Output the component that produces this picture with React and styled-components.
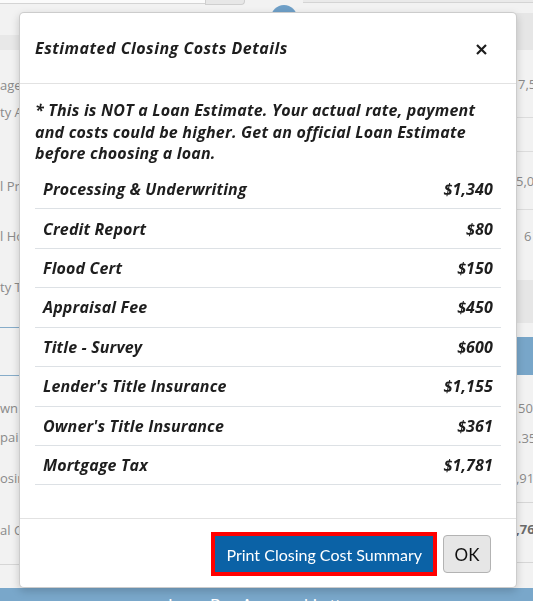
import React from "react";
import styled, { createGlobalStyle } from "styled-components";

const Global = createGlobalStyle`
  html, body { margin: 0; padding: 0; overflow: hidden; height: 100%; }
  body { background: #f2f2f2; font-family: Lato, "Noto Sans", sans-serif; }
  * { box-sizing: border-box; }
`;

const italicFont = `"Open Sans", "Noto Sans", sans-serif`;

/* ---------- background page ---------- */
const Page = styled.div`
  display: grid;
  grid-template-columns: 270px 1fr;
  width: 533px;
`;

const TopRow = styled.div`
  grid-column: 1 / -1;
  display: flex;
  align-items: flex-start;
  height: 13px;
`;

const Input = styled.div`
  width: 205px;
  height: 4px;
  background: #fbfbfb;
  border-bottom: 1px solid #d4d4d4;
`;

const Addon = styled.div`
  width: 40px;
  height: 5px;
  background: #e7e7e7;
  border: 1px solid #cfcfcf;
  border-top: none;
  border-radius: 0 0 4px 0;
`;

const Dot = styled.div`
  margin: 5px 0 0 26px;
  width: 26px;
  height: 26px;
  flex: none;
  border-radius: 50%;
  background: #6e9fc7;
`;

const TopBar = styled.div`
  flex: 1;
  height: 3px;
  margin-left: 6px;
  background: #eaeaea;
  border-bottom: 1px solid #d4d4d4;
`;

const Column = styled.div`
  display: flex;
  flex-direction: column;
  overflow: hidden;
`;

const BgRow = styled.div`
  height: ${(p) => p.$h}px;
  flex: none;
  display: flex;
  align-items: center;
  background: ${(p) => p.$bg || "transparent"};
  border-top: ${(p) => (p.$top ? `1px solid ${p.$top}` : "none")};
  border-bottom: ${(p) => (p.$line ? `1px solid ${p.$line}` : "none")};
  padding-left: ${(p) => p.$indent || 0}px;
  font-family: "Open Sans", sans-serif;
  font-size: 13px;
  font-weight: ${(p) => (p.$bold ? 700 : 400)};
  color: ${(p) => (p.$bold ? "#6a6a6a" : "#8a8a8a")};
  white-space: nowrap;
`;

const BottomBar = styled.div`
  grid-column: 1 / -1;
  height: 40px;
  background: #79a7ca;
  color: #fff;
  font-family: Lato, sans-serif;
  font-size: 17px;
  line-height: 1;
  padding: 9px 0 0 168px;
`;

const leftRows = [
  { h: 22 },
  { h: 15, bg: "#e8e8e8" },
  { h: 23 },
  { h: 24, t: "age" },
  { h: 3 },
  { h: 24, t: "ty A" },
  { h: 50 },
  { h: 24, t: "l Pr" },
  { h: 26 },
  { h: 24, t: "l Ho" },
  { h: 27 },
  { h: 24, t: "ty T" },
  { h: 28 },
  { h: 49, top: "#86acc9", line: "#86acc9" },
  { h: 20 },
  { h: 24, t: "wn" },
  { h: 5 },
  { h: 24, t: "pai" },
  { h: 17 },
  { h: 24, t: "osin" },
  { h: 28 },
  { h: 24, t: "al C" },
  { h: 23, line: "#d6d6d6" },
  { h: 23 },
];

const rightRows = [
  { h: 37, bg: "#e6e6e6" },
  { h: 68, t: "7,5", i: 248, line: "#dcdcdc" },
  { h: 34, line: "#dcdcdc" },
  { h: 58, t: "5,0", i: 246, line: "#dcdcdc" },
  { h: 52, t: "6", i: 254 },
  { h: 18 },
  { h: 43, bg: "#e6e6e6" },
  { h: 14 },
  { h: 38, bg: "#78a6c9" },
  { h: 21 },
  { h: 24, t: "50", i: 248 },
  { h: 5 },
  { h: 25, t: ".35", i: 248 },
  { h: 16 },
  { h: 24, t: ",91", i: 246 },
  { h: 13, line: "#d6d6d6" },
  { h: 14 },
  { h: 24, t: ",76", i: 246, b: true },
  { h: 22, line: "#d6d6d6" },
  { h: 23 },
];

/* ---------- modal ---------- */
const Overlay = styled.div`
  position: fixed;
  inset: 0;
  padding: 12px 0 0 19px;
`;

const Modal = styled.div`
  width: 498px;
  background: #fff;
  border: 1px solid rgba(0, 0, 0, 0.2);
  border-radius: 5px;
  box-shadow: 0 3px 9px rgba(0, 0, 0, 0.18);
  color: #1e1e1e;
  font-family: ${italicFont};
`;

const Header = styled.div`
  height: 71px;
  display: flex;
  align-items: center;
  justify-content: space-between;
  padding: 0 0 0 15px;
  border-bottom: 1px solid #e2e2e2;
`;

const Title = styled.h5`
  margin: 0;
  font-size: 16px;
  font-weight: 700;
  font-style: italic;
  letter-spacing: 0.5px;
`;

const Close = styled.button`
  width: 70px;
  height: 40px;
  border: none;
  background: none;
  display: flex;
  align-items: center;
  justify-content: center;
  padding: 2px 0 0 0;
  cursor: pointer;
`;

const Body = styled.div`
  padding: 16px 15px;
`;

const Disclaimer = styled.p`
  margin: 0 0 5px;
  font-size: 16px;
  font-weight: 700;
  font-style: italic;
  line-height: 21.5px;
  letter-spacing: 0.2px;
`;

const Table = styled.table`
  width: 100%;
  border-collapse: collapse;
  margin-bottom: 17px;
`;

const Cell = styled.td`
  height: 39.43px;
  padding: 0 8px;
  border-bottom: 1px solid #dde1e5;
  font-size: 16px;
  font-weight: 700;
  font-style: italic;
  letter-spacing: 0.15px;
  text-align: ${(p) => (p.$right ? "right" : "left")};
  white-space: nowrap;
`;

const Footer = styled.div`
  display: flex;
  justify-content: flex-end;
  align-items: center;
  gap: 10px;
  padding: 16px 25px 14px;
  border-top: 1px solid #e2e2e2;
`;

const PrintButton = styled.button`
  height: 36px;
  padding: 0 11px;
  border: none;
  background: #0b62a6;
  color: #fff;
  font-family: Lato, sans-serif;
  font-size: 16px;
  outline: 4px solid #ff0000;
  cursor: pointer;
`;

const OkButton = styled.button`
  height: 38px;
  width: 48px;
  border: 1px solid #b3b3b3;
  border-radius: 4px;
  background: #e6e6e6;
  color: #111;
  font-family: Lato, sans-serif;
  font-size: 17px;
  cursor: pointer;
`;

const costs = [
  ["Processing & Underwriting", "$1,340"],
  ["Credit Report", "$80"],
  ["Flood Cert", "$150"],
  ["Appraisal Fee", "$450"],
  ["Title - Survey", "$600"],
  ["Lender's Title Insurance", "$1,155"],
  ["Owner's Title Insurance", "$361"],
  ["Mortgage Tax", "$1,781"],
];

export default function App() {
  return (
    <>
      <Global />
      <Page>
        <TopRow>
          <Input />
          <Addon />
          <Dot />
          <TopBar />
        </TopRow>
        <Column>
          {leftRows.map((r, k) => (
            <BgRow key={k} $h={r.h} $bg={r.bg} $line={r.line} $top={r.top}>
              {r.t}
            </BgRow>
          ))}
        </Column>
        <Column>
          {rightRows.map((r, k) => (
            <BgRow key={k} $h={r.h} $bg={r.bg} $line={r.line} $indent={r.i} $bold={r.b}>
              {r.t}
            </BgRow>
          ))}
        </Column>
        <BottomBar>Issue Pre-Approval Letter</BottomBar>
      </Page>

      <Overlay>
        <Modal>
          <Header>
            <Title>Estimated Closing Costs Details</Title>
            <Close aria-label="Close">
              <svg width="11" height="11" viewBox="0 0 11 11">
                <path d="M1 1 L10 10 M10 1 L1 10" stroke="#1e1e1e" strokeWidth="2.2" strokeLinecap="butt" />
              </svg>
            </Close>
          </Header>
          <Body>
            <Disclaimer>
              * This is NOT a Loan Estimate. Your actual rate, payment and costs could be higher. Get an official Loan Estimate before choosing a loan.
            </Disclaimer>
            <Table>
              <tbody>
                {costs.map(([label, value]) => (
                  <tr key={label}>
                    <Cell>{label}</Cell>
                    <Cell $right>{value}</Cell>
                  </tr>
                ))}
              </tbody>
            </Table>
          </Body>
          <Footer>
            <PrintButton>Print Closing Cost Summary</PrintButton>
            <OkButton>OK</OkButton>
          </Footer>
        </Modal>
      </Overlay>
    </>
  );
}
